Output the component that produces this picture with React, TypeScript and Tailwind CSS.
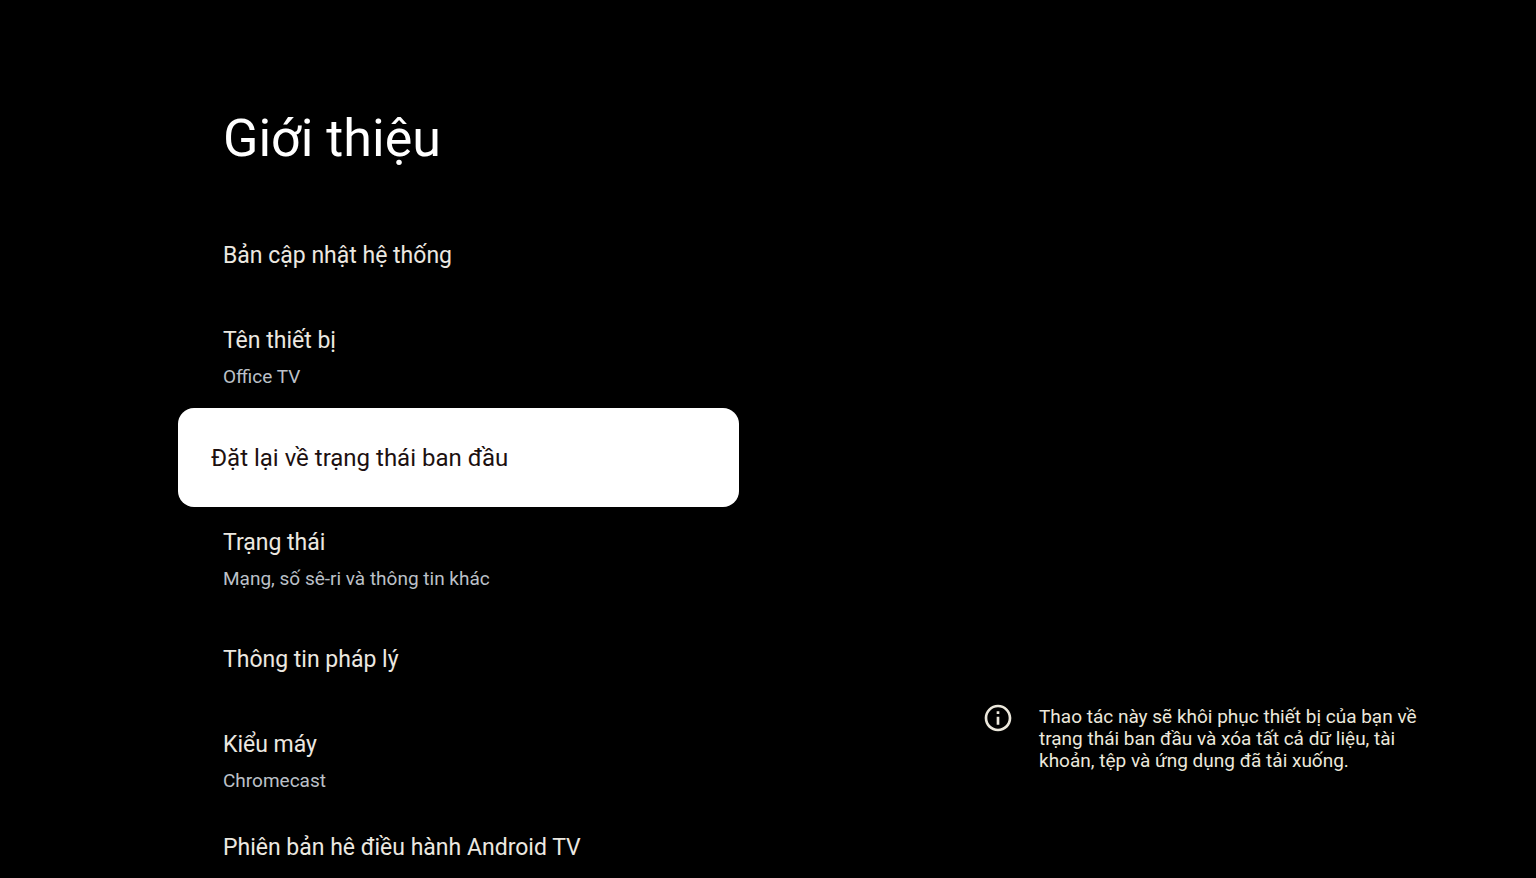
import { useState } from "react";
import { MdInfoOutline } from "react-icons/md";

interface Setting {
  title: string;
  summary?: string;
}

const settings: Setting[] = [
  { title: "Bản cập nhật hệ thống" },
  { title: "Tên thiết bị", summary: "Office TV" },
  { title: "Đặt lại về trạng thái ban đầu" },
  { title: "Trạng thái", summary: "Mạng, số sê-ri và thông tin khác" },
  { title: "Thông tin pháp lý" },
  { title: "Kiểu máy", summary: "Chromecast" },
];

const App: React.FC = () => {
  const [selected, setSelected] = useState<number>(2);

  return (
    <main className="grid grid-cols-[739fr_797fr] h-screen overflow-hidden bg-black font-['Roboto','Noto_Sans',sans-serif]">
      <section className="pl-[178px] pt-[107px]">
        <h1 className="pl-[45px] h-[99px] text-[52px] leading-[64px] text-white whitespace-nowrap">
          Giới thiệu
        </h1>
        <ul>
          {settings.map((item, index) => (
            <li key={item.title}>
              <button
                type="button"
                onClick={() => setSelected(index)}
                className={`block w-full text-left rounded-2xl cursor-pointer outline-none ${
                  item.summary ? "pt-[21px] pb-[19px]" : "min-h-[99px]"
                } ${
                  selected === index
                    ? "bg-white text-[#1c1010] pl-[33px] text-[24px]"
                    : "text-[#ece8e0] pl-[45px] text-[23px]"
                }`}
              >
                <span className="block leading-[30px]">{item.title}</span>
                {item.summary && (
                  <span className="block mt-[9px] text-[19px] leading-6 text-[#bcc0c8]">
                    {item.summary}
                  </span>
                )}
              </button>
            </li>
          ))}
          <li>
            <button
              type="button"
              className="block w-full pt-[21px] pb-[19px] pl-[45px] text-left text-[23px] leading-[30px] text-[#ece8e0] cursor-pointer"
            >
              Phiên bản hê điều hành Android TV
            </button>
          </li>
        </ul>
      </section>

      <aside className="flex items-end pl-[243px] pr-24 pb-[110px]">
        <div className="flex items-start gap-[25px] text-[#ece8dc]">
          <MdInfoOutline className="shrink-0 size-8 -mt-1" />
          <p className="text-[19px] leading-[22px]">
            Thao tác này sẽ khôi phục thiết bị của bạn về trạng thái ban đầu và
            xóa tất cả dữ liệu, tài khoản, tệp và ứng dụng đã tải xuống.
          </p>
        </div>
      </aside>
    </main>
  );
};

export default App;
